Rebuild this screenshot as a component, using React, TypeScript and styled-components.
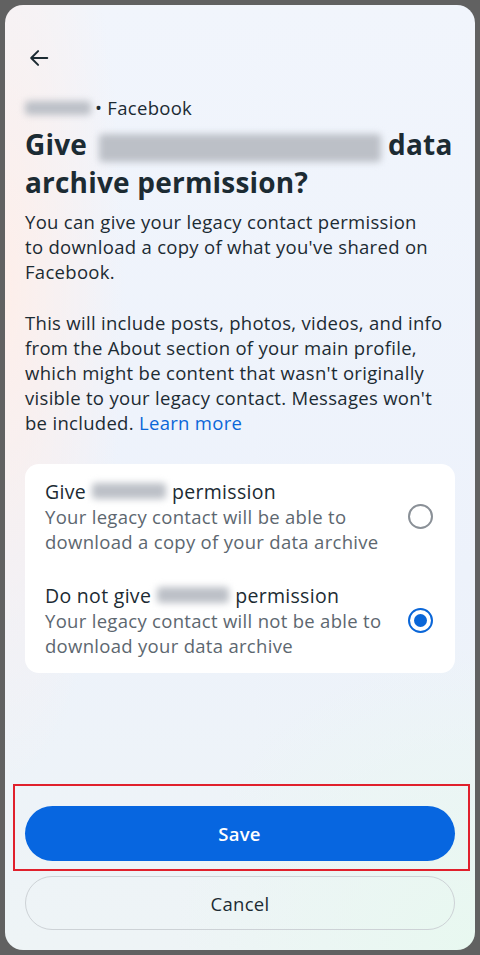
import React from "react";
import styled, { createGlobalStyle } from "styled-components";

const Global = createGlobalStyle`
  html, body { margin: 0; padding: 0; background: #616161; }
  body { font-family: "Open Sans", "Noto Sans", Arial, sans-serif; -webkit-font-smoothing: antialiased; }
  * { box-sizing: border-box; }
`;

const Screen = styled.div`
  width: 480px;
  height: 955px;
  padding: 5px;
  background: #616161;
`;

const Card = styled.div`
  height: 945px;
  border-radius: 18px;
  background:
    radial-gradient(ellipse 120px 500px at 0% 30%, rgba(255, 238, 232, 0.9), rgba(255, 238, 232, 0) 100%),
    radial-gradient(ellipse 300px 300px at 100% 100%, rgba(232, 248, 240, 1), rgba(232, 248, 240, 0) 100%),
    linear-gradient(180deg, #f1f5fc 0%, #edf2fb 60%, #eef4f6 100%);
  display: flex;
  flex-direction: column;
  padding: 0 20px 20px 20px;
  color: #1c2b33;
`;

const BackButton = styled.button`
  border: none;
  background: transparent;
  padding: 0;
  margin: 41px 0 0 2px;
  width: 24px;
  height: 24px;
  display: flex;
  align-items: center;
  justify-content: center;
`;

const Meta = styled.div`
  margin-top: 27px;
  font-size: 18.5px;
  letter-spacing: 0.3px;
  line-height: 22px;
  color: #1c2b33;
  display: flex;
  align-items: center;
  gap: 4px;
`;

const Redacted = styled.span<{ $w: number; $h: number }>`
  display: inline-block;
  width: ${(p) => p.$w}px;
  height: ${(p) => p.$h}px;
  border-radius: 4px;
  background: #bcc0c7;
  filter: blur(3.5px);
  vertical-align: middle;
`;

const TitleRedacted = styled(Redacted)`
  margin-left: 4px;
`;

const Title = styled.h1`
  margin: 6px 0 0 0;
  font-size: 28px;
  line-height: 38px;
  font-weight: 700;
  color: #1c2b33;
  letter-spacing: 0.2px;
`;

const Body = styled.p<{ $maxWidth?: number }>`
  margin: 8px 0 0 0;
  max-width: ${(p) => (p.$maxWidth ? `${p.$maxWidth}px` : "none")};
  font-size: 18.5px;
  letter-spacing: 0.3px;
  line-height: 25.2px;
  color: #1c2b33;
  & + & {
    margin-top: 25px;
  }
`;

const Link = styled.a`
  color: #0a66d8;
  text-decoration: none;
`;

const OptionsCard = styled.div`
  margin-top: 28px;
  background: #ffffff;
  border-radius: 14px;
  padding: 15px 20px 14px 20px;
  display: flex;
  flex-direction: column;
  gap: 28px;
`;

const Option = styled.label`
  display: flex;
  align-items: center;
  gap: 12px;
`;

const OptionText = styled.div`
  flex: 1;
  display: flex;
  flex-direction: column;
`;

const OptionTitle = styled.div`
  font-size: 19.5px;
  letter-spacing: 0.3px;
  line-height: 25px;
  font-weight: 500;
  color: #1c2b33;
  display: flex;
  align-items: center;
  gap: 6px;
`;

const OptionDesc = styled.div`
  font-size: 18.5px;
  letter-spacing: 0.3px;
  line-height: 25.5px;
  color: #5d6770;
`;

const Radio = styled.span<{ $checked?: boolean }>`
  width: 25px;
  height: 25px;
  border-radius: 50%;
  border: 2.5px solid ${(p) => (p.$checked ? "#0a66d8" : "#8a9097")};
  flex: none;
  margin-right: 2px;
  display: flex;
  align-items: center;
  justify-content: center;
  &::after {
    content: "";
    display: ${(p) => (p.$checked ? "block" : "none")};
    width: 13px;
    height: 13px;
    border-radius: 50%;
    background: #0a66d8;
  }
`;

const Spacer = styled.div`
  flex: 1;
`;

const Highlight = styled.div`
  margin: 0 0 5px -12px;
  width: 457px;
  border: 2.5px solid #e0202c;
  padding: 19.5px 13px 8.5px 9.5px;
`;

const PrimaryButton = styled.button`
  width: 430px;
  height: 55px;
  border-radius: 28px;
  border: none;
  background: #0766e0;
  color: #ffffff;
  font-family: inherit;
  font-size: 18.5px;
  letter-spacing: 0.3px;
  font-weight: 600;
`;

const SecondaryButton = styled.button`
  width: 430px;
  height: 54px;
  border-radius: 28px;
  border: 1px solid #cdd2d6;
  background: transparent;
  color: #1c2b33;
  font-family: inherit;
  font-size: 18.5px;
  letter-spacing: 0.3px;
  font-weight: 500;
`;

export default function App() {
  return (
    <>
      <Global />
      <Screen>
        <Card>
          <BackButton aria-label="Back">
            <svg width="22" height="22" viewBox="0 0 24 24" fill="none">
              <path d="M21 12H4M11 4.5L3.5 12L11 19.5" stroke="#1c2b33" strokeWidth="2.2" strokeLinecap="round" strokeLinejoin="round" />
            </svg>
          </BackButton>
          <Meta>
            <Redacted $w={66} $h={14} />
            <span>• Facebook</span>
          </Meta>
          <Title>
            Give <TitleRedacted $w={282} $h={28} /> data archive permission?
          </Title>
          <Body $maxWidth={406}>
            You can give your legacy contact permission to download a copy of what you've shared on Facebook.
          </Body>
          <Body>
            This will include posts, photos, videos, and info from the About section of your main profile, which might be content that wasn't originally visible to your legacy contact. Messages won't be included. <Link href="#">Learn more</Link>
          </Body>
          <OptionsCard>
            <Option>
              <OptionText>
                <OptionTitle>
                  <span>Give</span>
                  <Redacted $w={74} $h={16} />
                  <span>permission</span>
                </OptionTitle>
                <OptionDesc>Your legacy contact will be able to download a copy of your data archive</OptionDesc>
              </OptionText>
              <Radio />
            </Option>
            <Option>
              <OptionText>
                <OptionTitle>
                  <span>Do not give</span>
                  <Redacted $w={72} $h={16} />
                  <span>permission</span>
                </OptionTitle>
                <OptionDesc>Your legacy contact will not be able to download your data archive</OptionDesc>
              </OptionText>
              <Radio $checked />
            </Option>
          </OptionsCard>
          <Spacer />
          <Highlight>
            <PrimaryButton>Save</PrimaryButton>
          </Highlight>
          <SecondaryButton>Cancel</SecondaryButton>
        </Card>
      </Screen>
    </>
  );
}
